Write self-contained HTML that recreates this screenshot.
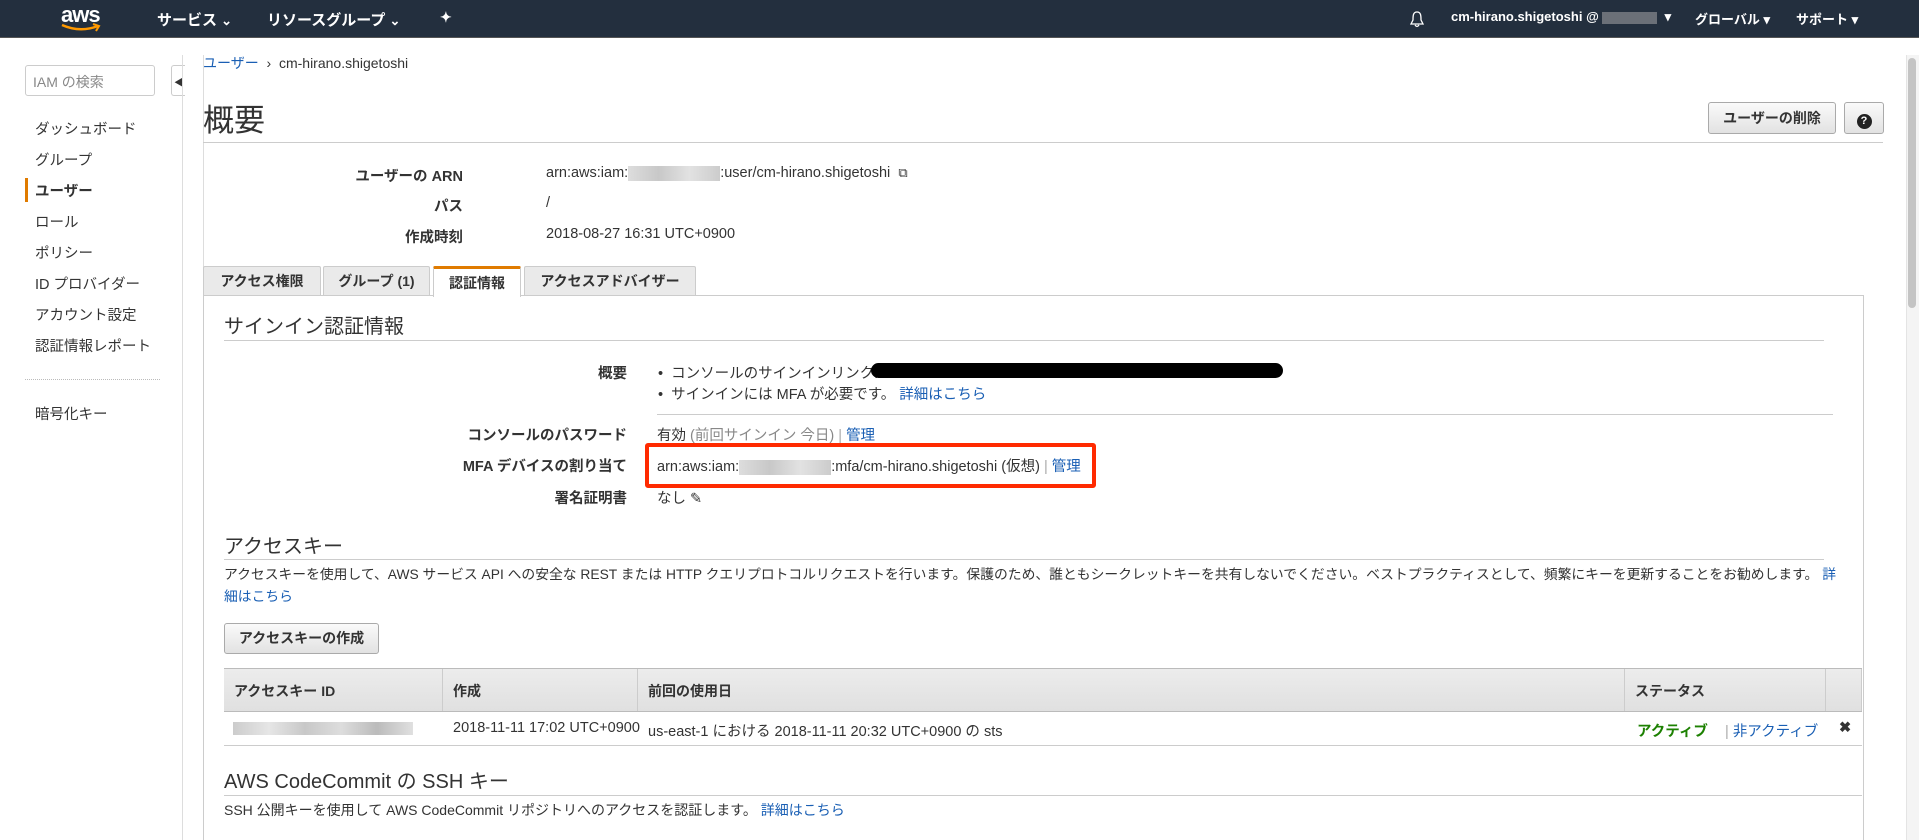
<!DOCTYPE html>
<html><head><meta charset="utf-8"><style>
*{margin:0;padding:0;box-sizing:border-box}
html,body{width:1919px;height:840px;overflow:hidden}
body{background:#fff;font-family:"Liberation Sans","Noto Sans CJK JP",sans-serif;font-size:14.5px;color:#333;position:relative}
.a{position:absolute;white-space:nowrap}
.nav{position:absolute;left:0;top:0;width:1919px;height:38px;background:#232f3e;border-bottom:1px solid #555}
.nav .a{color:#fff;font-weight:bold;font-size:15px;top:9px}
.nav .s{font-size:13px}
.lbl{font-weight:bold;text-align:right;right:calc(1919px - 463px)}
.link{color:#1a5fb4}
.hr{position:absolute;height:1px;background:#ccc}
.tab{position:absolute;top:266px;height:30px;border:1px solid #ccc;border-bottom:none;background:#eaeaea;font-weight:bold;font-size:14px;text-align:center;line-height:28px;border-radius:2px 2px 0 0}
.btn{position:absolute;border:1px solid #aaa;border-radius:3px;background:linear-gradient(#fafafa,#e2e2e2);font-weight:bold;font-size:14px;text-align:center}
.th{position:absolute;top:669px;height:42px;background:linear-gradient(#ececec,#e0e0e0);border-right:1px solid #ccc;font-weight:bold;padding:12px 10px;font-size:14px}
.blur{position:absolute;background:linear-gradient(90deg,#ccc,#e6e6e6,#c8c8c8,#ddd,#bbb,#e0e0e0);}
</style></head><body>
<div class="nav">
 <div class="a" style="left:61px;top:2px;font-size:22px;font-weight:bold;color:#fff;letter-spacing:-1px">aws</div>
 <svg class="a" style="left:60px;top:23px" width="42" height="10"><path d="M2 2 Q20 10 38 3" stroke="#f90" stroke-width="2.5" fill="none"/><path d="M33 1 L39 3 L36 8" stroke="#f90" stroke-width="2" fill="none"/></svg>
 <div class="a" style="left:157px">サービス <span class="s">⌄</span></div>
 <div class="a" style="left:267px">リソースグループ <span class="s">⌄</span></div>
 <div class="a" style="left:440px;font-size:14px">✦</div>
 <svg class="a" style="left:1409px;top:10px" width="16" height="18"><path d="M8 2 C4 2 4 6 4 10 L2 14 H14 L12 10 C12 6 12 2 8 2Z M6 15 Q8 18 10 15" stroke="#fff" stroke-width="1.3" fill="none"/></svg>
 <div class="a" style="left:1451px;font-size:13px">cm-hirano.shigetoshi @ <span style="display:inline-block;width:55px;height:12px;background:#6b7078;vertical-align:middle"></span> &nbsp;<span class="s">▾</span></div>
 <div class="a" style="left:1695px;font-size:13px">グローバル <span class="s">▾</span></div>
 <div class="a" style="left:1796px;font-size:13px">サポート <span class="s">▾</span></div>
</div>
<div class="a" style="left:25px;top:65px;width:130px;height:31px;border:1px solid #ccc;border-radius:3px;color:#888;padding:6px 7px;font-size:14px">IAM の検索</div>
<div class="a" style="left:171px;top:65px;width:14px;height:31px;border:1px solid #ccc;border-right:none;border-radius:3px 0 0 3px;background:#fff;font-size:10px;padding:8px 2px">◀</div>
<div style="position:absolute;left:182px;top:55px;width:1px;height:785px;background:#ddd"></div>
<div style="position:absolute;left:203px;top:55px;width:1px;height:785px;background:#ddd"></div>
<div class="a" style="left:35px;top:118px">ダッシュボード</div>
<div class="a" style="left:35px;top:149px">グループ</div>
<div class="a" style="left:25px;top:178px;width:3px;height:24px;background:#e07b00"></div>
<div class="a" style="left:35px;top:180px;font-weight:bold">ユーザー</div>
<div class="a" style="left:35px;top:211px">ロール</div>
<div class="a" style="left:35px;top:242px">ポリシー</div>
<div class="a" style="left:35px;top:273px">ID プロバイダー</div>
<div class="a" style="left:35px;top:304px">アカウント設定</div>
<div class="a" style="left:35px;top:335px">認証情報レポート</div>
<div class="a" style="left:25px;top:379px;width:135px;border-top:1px dotted #bbb"></div>
<div class="a" style="left:35px;top:403px">暗号化キー</div>
<div class="a" style="left:203px;top:53px;font-size:14px"><span class="link">ユーザー</span> &nbsp;›&nbsp; cm-hirano.shigetoshi</div>
<div class="a" style="left:203px;top:95px;font-size:31px;color:#333">概要</div>
<div class="btn" style="left:1708px;top:102px;width:128px;height:32px;line-height:30px">ユーザーの削除</div>
<div class="btn" style="left:1844px;top:102px;width:40px;height:32px;padding-top:8px"><span style="display:inline-block;width:15px;height:15px;border-radius:50%;background:#222;color:#fff;font-size:11px;line-height:15px">?</span></div>
<div class="hr" style="left:203px;top:142px;width:1680px"></div>
<div class="a lbl" style="top:165px">ユーザーの ARN</div>
<div class="a" style="left:546px;top:165px">arn:aws:iam:<span style="display:inline-block;width:92px;height:15px;background:linear-gradient(90deg,#ddd,#c8c8c8,#e2e2e2,#ccc);vertical-align:middle"></span>:user/cm-hirano.shigetoshi &nbsp;<span style="font-size:13px">⧉</span></div>
<div class="a lbl" style="top:195px">パス</div>
<div class="a" style="left:546px;top:195px">/</div>
<div class="a lbl" style="top:226px">作成時刻</div>
<div class="a" style="left:546px;top:226px">2018-08-27 16:31 UTC+0900</div>
<div class="tab" style="left:203px;width:118px">アクセス権限</div>
<div class="tab" style="left:323px;width:107px">グループ (1)</div>
<div class="tab" style="left:433px;width:88px;background:#fff;border-top:3px solid #e07b00;height:31px;z-index:2">認証情報</div>
<div class="tab" style="left:524px;width:172px">アクセスアドバイザー</div>
<div style="position:absolute;left:203px;top:295px;width:1661px;height:560px;border:1px solid #ccc"></div>
<div class="a" style="left:224px;top:310px;font-size:20px">サインイン認証情報</div>
<div class="hr" style="left:224px;top:340px;width:1600px"></div>
<div class="a lbl" style="top:362px;right:1292px">概要</div>
<div class="a" style="left:658px;top:362px">•&nbsp; コンソールのサインインリンク:</div>
<div class="a" style="left:871px;top:363px;width:412px;height:15px;background:#000;border-radius:8px"></div>
<div class="a" style="left:658px;top:383px">•&nbsp; サインインには MFA が必要です。 <span class="link">詳細はこちら</span></div>
<div class="hr" style="left:657px;top:414px;width:1176px"></div>
<div class="a lbl" style="top:424px;right:1292px">コンソールのパスワード</div>
<div class="a" style="left:657px;top:424px">有効 <span style="color:#888">(前回サインイン 今日)</span> <span style="color:#aaa">|</span> <span class="link">管理</span></div>
<div class="a lbl" style="top:455px;right:1292px">MFA デバイスの割り当て</div>
<div class="a" style="left:645px;top:443px;width:451px;height:45px;border:4px solid #ff2a00;border-radius:3px"></div>
<div class="a" style="left:657px;top:455px">arn:aws:iam:<span style="display:inline-block;width:92px;height:15px;background:linear-gradient(90deg,#ddd,#c8c8c8,#e2e2e2,#ccc);vertical-align:middle"></span>:mfa/cm-hirano.shigetoshi (仮想) <span style="color:#aaa">|</span> <span class="link">管理</span></div>
<div class="a lbl" style="top:487px;right:1292px">署名証明書</div>
<div class="a" style="left:657px;top:487px">なし ✎</div>
<div class="a" style="left:224px;top:530px;font-size:20px">アクセスキー</div>
<div class="hr" style="left:224px;top:559px;width:1600px"></div>
<div style="position:absolute;left:224px;top:564px;width:1640px;line-height:22px;font-size:13.8px">アクセスキーを使用して、AWS サービス API への安全な REST または HTTP クエリプロトコルリクエストを行います。保護のため、誰ともシークレットキーを共有しないでください。ベストプラクティスとして、頻繁にキーを更新することをお勧めします。 <span class="link">詳<br>細はこちら</span></div>
<div class="btn" style="left:224px;top:623px;width:155px;height:31px;line-height:29px">アクセスキーの作成</div>
<div class="hr" style="left:224px;top:668px;width:1638px;background:#bbb"></div>
<div class="th" style="left:224px;width:219px">アクセスキー ID</div>
<div class="th" style="left:443px;width:195px">作成</div>
<div class="th" style="left:638px;width:987px">前回の使用日</div>
<div class="th" style="left:1625px;width:201px">ステータス</div>
<div class="th" style="left:1826px;width:36px"></div>
<div class="hr" style="left:224px;top:711px;width:1638px;background:#bbb"></div>
<div class="blur" style="left:233px;top:722px;width:180px;height:13px"></div>
<div class="a" style="left:453px;top:720px">2018-11-11 17:02 UTC+0900</div>
<div class="a" style="left:648px;top:720px">us-east-1 における 2018-11-11 20:32 UTC+0900 の sts</div>
<div class="a" style="left:1637px;top:720px;color:#1d8102;font-weight:bold">アクティブ</div>
<div class="a" style="left:1725px;top:720px"><span style="color:#aaa">|</span> <span class="link">非アクティブ</span></div>
<div class="a" style="left:1839px;top:720px;font-weight:bold">✖</div>
<div class="hr" style="left:224px;top:745px;width:1638px"></div>
<div class="a" style="left:224px;top:765px;font-size:20px">AWS CodeCommit の SSH キー</div>
<div class="hr" style="left:224px;top:795px;width:1638px"></div>
<div class="a" style="left:224px;top:800px;font-size:14px">SSH 公開キーを使用して AWS CodeCommit リポジトリへのアクセスを認証します。 <span class="link">詳細はこちら</span></div>
<div class="a" style="left:1906px;top:55px;width:13px;height:785px;background:#f4f4f4;border-left:1px solid #e4e4e4"></div>
<div class="a" style="left:1908px;top:58px;width:8px;height:250px;background:#c4c4c4;border-radius:4px"></div>
</body></html>
